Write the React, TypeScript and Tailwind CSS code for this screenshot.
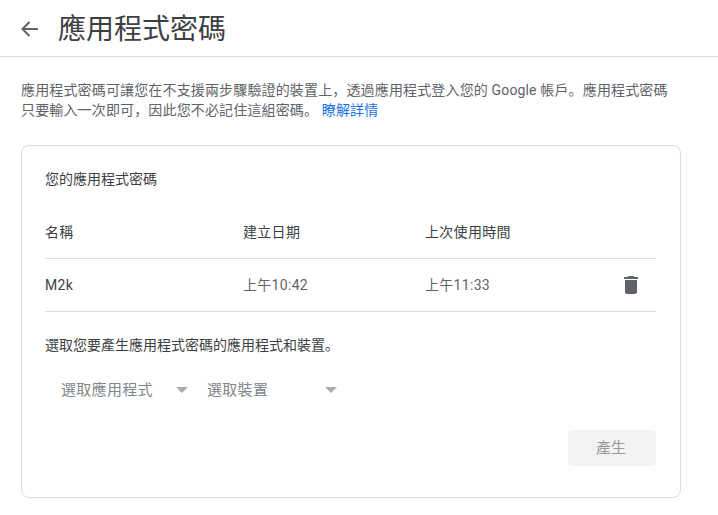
import React from 'react';

const FONT = "font-['Roboto','Noto_Sans_CJK_SC',sans-serif]";

// ── Select placeholder ───────────────────────────────────────────────────────
function SelectBox({ label, className }: { label: string; className: string }) {
  return (
    <div className={`flex h-9 items-center justify-between pl-4 text-[15px] tracking-[0.3px] text-[#80868b] ${className}`}>
      <span>{label}</span>
      <span className="h-0 w-0 border-x-[6px] border-t-[6px] border-x-transparent border-t-[#a8abae]" />
    </div>
  );
}

export default function App() {
  return (
    <div className={`h-[515px] w-[718px] overflow-hidden bg-white ${FONT}`}>
      <header className="flex h-[57px] items-center border-b border-[#dadce0] pl-[21px]">
        <svg width="17" height="16" viewBox="0 0 17 16" className="mt-0.5 text-[#5f6368]" fill="none" stroke="currentColor" strokeWidth="2">
          <path d="M17 8H2M8.5 1 1.5 8l7 7" />
        </svg>
        <h1 className="mt-[3px] ml-[20px] text-[28px] leading-9 text-[#3c4043]">應用程式密碼</h1>
      </header>

      <p className="mx-[21px] mt-[23px] w-[650px] text-sm leading-5 tracking-[0.15px] text-[#5f6368]">
        應用程式密碼可讓您在不支援兩步驟驗證的裝置上，透過應用程式登入您的 Google 帳戶。應用程式密碼只要輸入一次即可，因此您不必記住這組密碼。{' '}
        <a className="text-[#1a73e8]">瞭解詳情</a>
      </p>

      <section className="mx-[21px] mt-[25px] h-[353px] w-[660px] rounded-lg border border-[#dadce0] pt-[23px] pr-[24px] pl-[23px]">
        <div className="text-sm leading-5 text-[#3c4043]">您的應用程式密碼</div>

        <div className="mt-[23px] flex h-[47px] items-center border-b border-[#dadce0] pb-[7px] text-sm tracking-[0.3px] text-[#3c4043]">
          <div className="w-[198px]">名稱</div>
          <div className="w-[182px]">建立日期</div>
          <div>上次使用時間</div>
        </div>

        <div className="flex h-[53px] items-center border-b border-[#dadce0] text-sm text-[#5f6368]">
          <div className="w-[198px] tracking-[0.3px] text-[#3c4043]">M2k</div>
          <div className="w-[182px] tracking-[0.3px]">上午10:42</div>
          <div className="flex-1 tracking-[0.3px]">上午11:33</div>
          <svg width="24" height="24" viewBox="0 0 24 24" fill="#5f6368" className="mr-[13px]">
            <path d="M6 19c0 1.1.9 2 2 2h8c1.1 0 2-.9 2-2V7H6v12zM19 4h-3.5l-1-1h-5l-1 1H5v2h14V4z" />
          </svg>
        </div>

        <div className="mt-[23px] text-sm leading-5 text-[#3c4043]">選取您要產生應用程式密碼的應用程式和裝置。</div>

        <div className="mt-[17px] flex">
          <SelectBox label="選取應用程式" className="w-[143px]" />
          <SelectBox label="選取裝置" className="ml-[3px] w-[146px]" />
        </div>

        <div className="mt-[22px] flex justify-end">
          <button className="h-9 w-[88px] rounded bg-[#f3f3f3] pr-0.5 text-[15px] text-[#9a9a9a]">產生</button>
        </div>
      </section>
    </div>
  );
}
